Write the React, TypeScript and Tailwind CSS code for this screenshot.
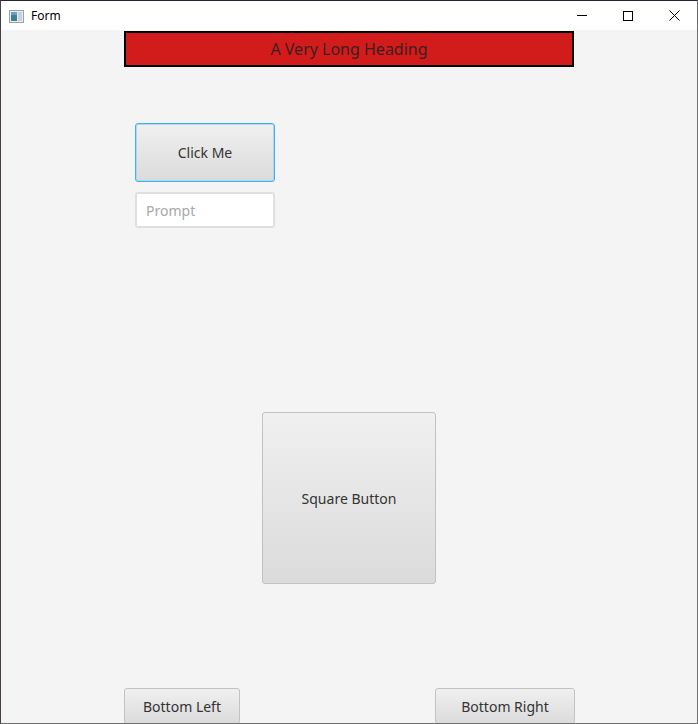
const font = { fontFamily: '"Noto Sans", "Open Sans", sans-serif' };

const btnBase =
  "shrink-0 rounded-[3px] border bg-gradient-to-b from-[#f0f0f0] to-[#dbdbdb] text-[14px] text-[#333333] flex items-center justify-center";
const btn = `${btnBase} border-[#c2c2c2]`;

const TitleBar = () => (
  <div className="h-[29px] bg-white flex items-center shrink-0">
    <svg width="15" height="13" viewBox="0 0 15 13" className="ml-[8px] mt-[1px]">
      <rect x="0.5" y="0.5" width="14" height="12" fill="#e9edf0" stroke="#9aa3a8" />
      <rect x="2" y="2" width="6" height="9" fill="#3f7f8f" />
      <rect x="2" y="2" width="6" height="3" fill="#6aa0c8" />
      <rect x="9" y="2" width="4" height="9" fill="#c9d2d8" />
    </svg>
    <span className="ml-[7px] text-[12px] text-black" style={{ fontFamily: '"Noto Sans", sans-serif' }}>
      Form
    </span>
    <div className="ml-auto flex h-full">
      <div className="w-[46px] h-full flex items-center justify-center">
        <div className="w-[10px] h-px bg-black" />
      </div>
      <div className="w-[46px] h-full flex items-center justify-center">
        <div className="w-[10px] h-[10px] border border-black" />
      </div>
      <div className="w-[46px] h-full flex items-center justify-center">
        <svg width="11" height="11" viewBox="0 0 11 11">
          <path d="M0.5 0.5 L10.5 10.5 M10.5 0.5 L0.5 10.5" stroke="black" strokeWidth="1" />
        </svg>
      </div>
    </div>
  </div>
);

export default function App() {
  return (
    <div
      className="w-[698px] h-[724px] border border-[#6e6e6e] border-t-[#2e2236] border-l-[#4a3a4a] flex flex-col overflow-hidden bg-[#f4f4f4]"
      style={font}
    >
      <TitleBar />
      <div className="flex-1 flex flex-col overflow-hidden">
        <div className="shrink-0 mt-px ml-[123px] w-[450px] h-[36px] border-2 border-black bg-[#d21c1c] flex items-center justify-center text-[16px] text-[#3d1f1f]">
          A Very Long Heading
        </div>
        <button
          className={`${btnBase} mt-[56px] ml-[134px] w-[140px] h-[59px] border-[#45b2e3] shadow-[inset_0_0_0_1px_#a9d9f0]`}
        >
          Click Me
        </button>
        <input
          placeholder="Prompt"
          className="shrink-0 mt-[10px] ml-[134px] w-[140px] h-[36px] rounded-[3px] border-2 border-[#e0e0e0] bg-white px-[9px] text-[14px] text-[#333] placeholder:text-[#a8a8a8] outline-none"
        />
        <button className={`${btn} mt-[184px] ml-[261px] w-[174px] h-[172px]`}>Square Button</button>
        <div className="mt-[104px] ml-[123px] w-[451px] flex justify-between shrink-0">
          <button className={`${btn} w-[116px] h-[36px]`}>Bottom Left</button>
          <button className={`${btn} w-[140px] h-[36px]`}>Bottom Right</button>
        </div>
      </div>
    </div>
  );
}
